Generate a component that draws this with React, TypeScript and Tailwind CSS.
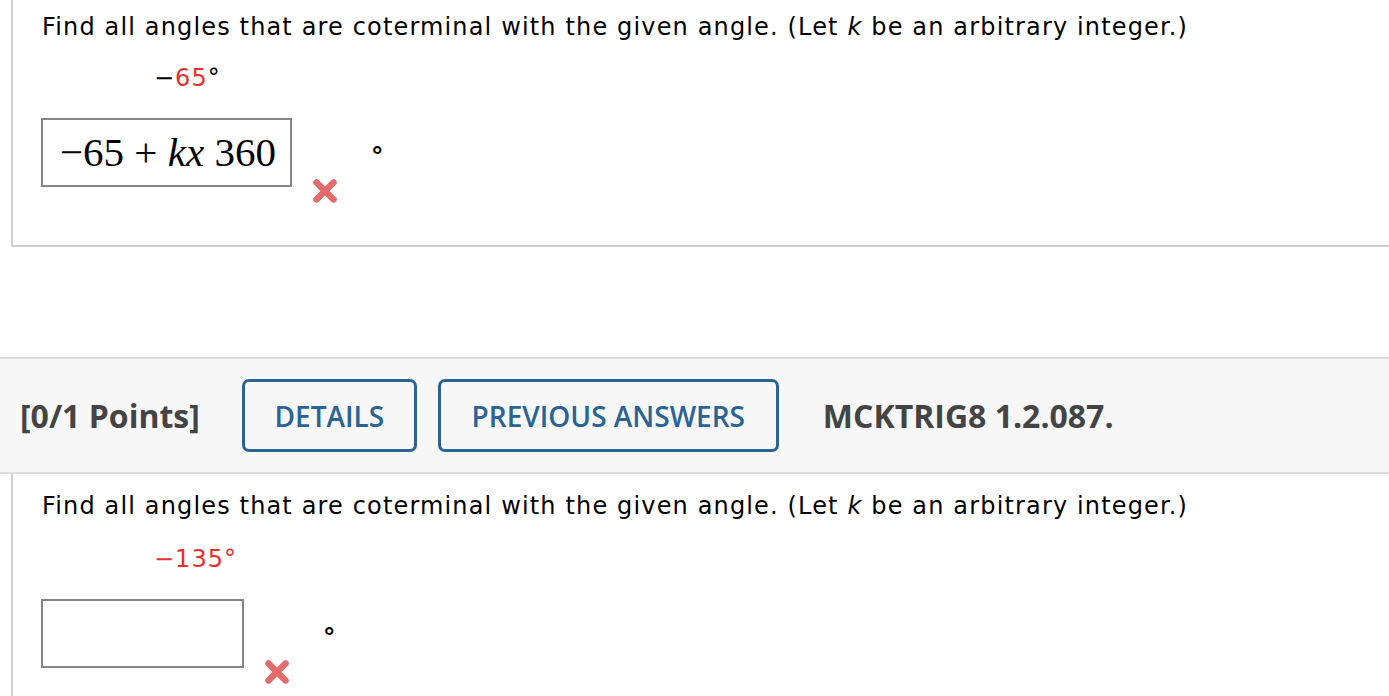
import React from "react";

const textFont = { fontFamily: '"DejaVu Sans", Verdana, sans-serif' };
const headFont = { fontFamily: '"Open Sans", "Noto Sans", sans-serif' };
const mathFont = { fontFamily: '"Liberation Serif", "DejaVu Serif", serif' };

function WrongMark() {
  return (
    <svg width="28" height="28" viewBox="0 0 28 28" className="shrink-0">
      <g stroke="#e25b5b" strokeWidth="6.5" strokeLinecap="round" opacity="0.9">
        <line x1="5.5" y1="5.5" x2="22.5" y2="22.5" />
        <line x1="22.5" y1="5.5" x2="5.5" y2="22.5" />
      </g>
    </svg>
  );
}

function Question({
  value,
  minusRed,
  answer,
  boxWidth,
  topPad,
  gap,
}: {
  value: string;
  minusRed: boolean;
  answer?: React.ReactNode;
  boxWidth: string;
  topPad: string;
  gap: string;
}) {
  return (
    <div className={`pl-[28px] ${topPad}`}>
      <p className="text-[24px] leading-[36px] tracking-[1.15px] text-black ml-[1px]" style={textFont}>
        Find all angles that are coterminal with the given angle. (Let <i>k</i> be an arbitrary integer.)
      </p>
      <p className={`${gap} ml-[113px] text-[24px] leading-[36px] tracking-[1px]`} style={textFont}>
        <span className={minusRed ? "text-[#e8302a]" : "text-black"}>−</span>
        <span className="text-[#e8302a]">{value}</span>
        <span className={minusRed ? "text-[#e8302a]" : "text-black"}>°</span>
      </p>
      <div className="mt-[22px] flex items-start">
        <div
          className={`${boxWidth} h-[69px] border-2 border-[#858585] bg-white flex items-center px-[17px] text-[41px] text-black`}
          style={mathFont}
        >
          {answer}
        </div>
        <div className="ml-[19px] mt-[59px]">
          <WrongMark />
        </div>
        <span className="ml-[32px] mt-[21px] text-[25px] leading-[36px] font-bold text-black" style={textFont}>
          °
        </span>
      </div>
    </div>
  );
}

export default function App() {
  return (
    <div className="w-[1389px] h-[696px] overflow-hidden bg-white">
      <div className="ml-[11px] h-[247px] border-l-2 border-b-2 border-[#cfcfcf]">
        <Question
          value="65"
          minusRed={false}
          boxWidth="w-[251px]"
          topPad="pt-[9px]"
          gap="mt-[15px]"
          answer={
            <span className="whitespace-nowrap">
              −65 + <i>kx</i> 360
            </span>
          }
        />
      </div>

      <div
        className="mt-[110px] h-[117px] border-y-2 border-[#dddddd] bg-[#f7f7f7] flex items-center pl-[20px]"
        style={headFont}
      >
        <span className="text-[32px] font-bold text-[#444444]">[0/1 Points]</span>
        <button className="ml-[42px] w-[175px] h-[73px] rounded-[7px] border-[3px] border-[#2a6395] text-[#2a6395] text-[28px] font-semibold">
          DETAILS
        </button>
        <button className="ml-[21px] w-[341px] h-[73px] rounded-[7px] border-[3px] border-[#2a6395] text-[#2a6395] text-[28px] font-semibold">
          PREVIOUS ANSWERS
        </button>
        <span className="ml-[44px] text-[32px] font-bold text-[#444444]">MCKTRIG8 1.2.087.</span>
      </div>

      <div className="ml-[11px] h-[300px] border-l-2 border-[#cfcfcf]">
        <Question
          value="135"
          minusRed={true}
          boxWidth="w-[203px]"
          topPad="pt-[14px]"
          gap="mt-[17px]"
        />
      </div>
    </div>
  );
}
